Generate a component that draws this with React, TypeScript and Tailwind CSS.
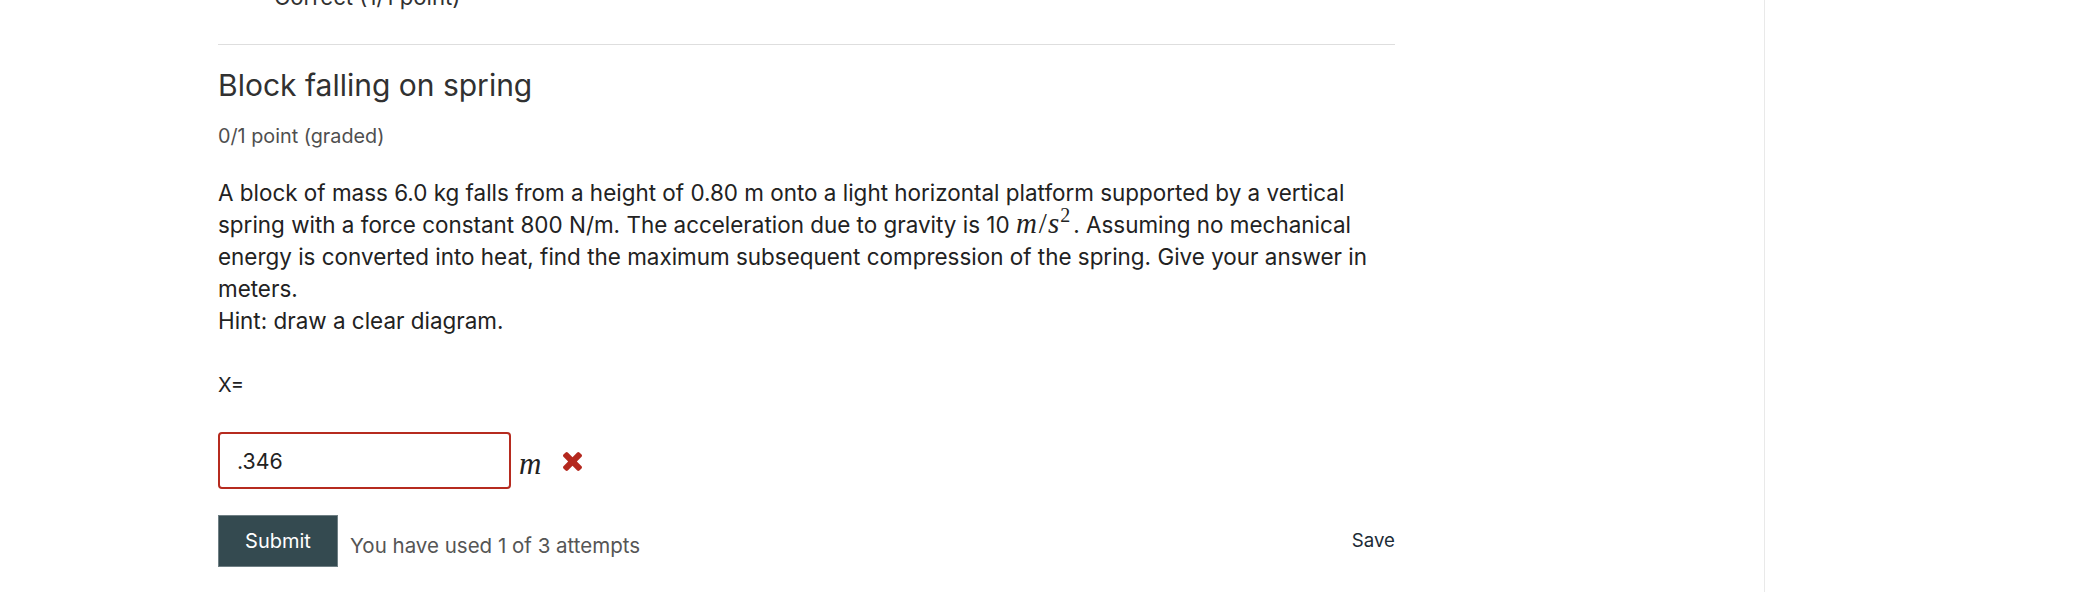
import React from "react";

function TimesIcon() {
  return (
    <svg width="19" height="19" viewBox="110 366 1188 1188" aria-hidden="true">
      <path
        fill="#b4281e"
        d="M1298 1322q0 40-28 68l-136 136q-28 28-68 28t-68-28l-294-294-294 294q-28 28-68 28t-68-28l-136-136q-28-28-28-68t28-68l294-294-294-294q-28-28-28-68t28-68l136-136q28-28 68-28t68 28l294 294 294-294q28-28 68-28t68 28l136 136q28 28 28 68t-28 68l-294 294 294 294q28 28 28 68z"
      />
    </svg>
  );
}

export default function App() {
  return (
    <div
      className="flex w-[2096px] h-[592px] overflow-hidden bg-white text-[#313131]"
      style={{ fontFamily: "Inter, 'Liberation Sans', sans-serif" }}
    >
      <main className="w-[1765px] h-full border-r border-[#e9e9e9] pl-[218px]">
        <div className="w-[1177px]">
          <div className="-mt-[19px] pl-[56px] text-[22.2px] leading-[32px] text-[#313131]">
            Correct (1/1 point)
          </div>
          <div className="mt-[31px] border-t border-[#dedede]" />
          <h2 className="mt-[20px] text-[30px] leading-[40px] font-normal text-[#313131]">
            Block falling on spring
          </h2>
          <div className="mt-[17px] text-[19.8px] leading-[28px] text-[#4f4f4f]">
            0/1 point (graded)
          </div>
          <p className="mt-[27px] text-[22.45px] leading-[32px] text-[#222222]">
            A block of mass 6.0 kg falls from a height of 0.80 m onto a light horizontal platform supported by a vertical
            spring with a force constant 800 N/m. The acceleration due to gravity is 10{" "}
            <span className="font-['Liberation_Serif'] text-[29px] leading-none">
              <span className="italic pr-[1px]">m</span>
              <span className="px-[1px]">/</span>
              <span className="italic">s</span>
              <sup className="text-[20px] not-italic relative -top-[11px] align-baseline pl-[1px] pr-[3px]">2</sup>
            </span>
            . Assuming no mechanical energy is converted into heat, find the maximum subsequent compression of the spring.
            Give your answer in meters.
            <br />
            Hint: draw a clear diagram.
          </p>
          <div className="mt-[32px] text-[20px] leading-[32px] text-[#222222]">X=</div>
          <div className="mt-[31px] flex items-center">
            <input
              readOnly
              value=".346"
              className="w-[293px] h-[57px] border-2 border-[#b62b1f] rounded-[4px] pl-[17px] text-[21.33px] text-[#222222] outline-none bg-white"
              style={{ fontFamily: "Inter, 'Liberation Sans', sans-serif" }}
            />
            <span className="ml-[8px] mt-[6px] font-['Liberation_Serif'] italic text-[31px] leading-none text-[#222222]">
              m
            </span>
            <span className="ml-[22px] mt-[2px] flex items-center">
              <TimesIcon />
            </span>
          </div>
          <div className="mt-[26px] flex items-center justify-between">
            <div className="flex items-center">
              <button className="w-[120px] h-[52px] bg-[#344a50] border border-[#6f7f84] text-white text-[20px] leading-none">
                Submit
              </button>
              <span className="ml-[12px] mt-[10px] text-[20.5px] leading-[28px] text-[#555555]">
                You have used 1 of 3 attempts
              </span>
            </div>
            <span className="text-[18.67px] leading-[28px] text-[#1c2b36]">Save</span>
          </div>
        </div>
      </main>
      <aside className="flex-1 h-full" />
    </div>
  );
}
